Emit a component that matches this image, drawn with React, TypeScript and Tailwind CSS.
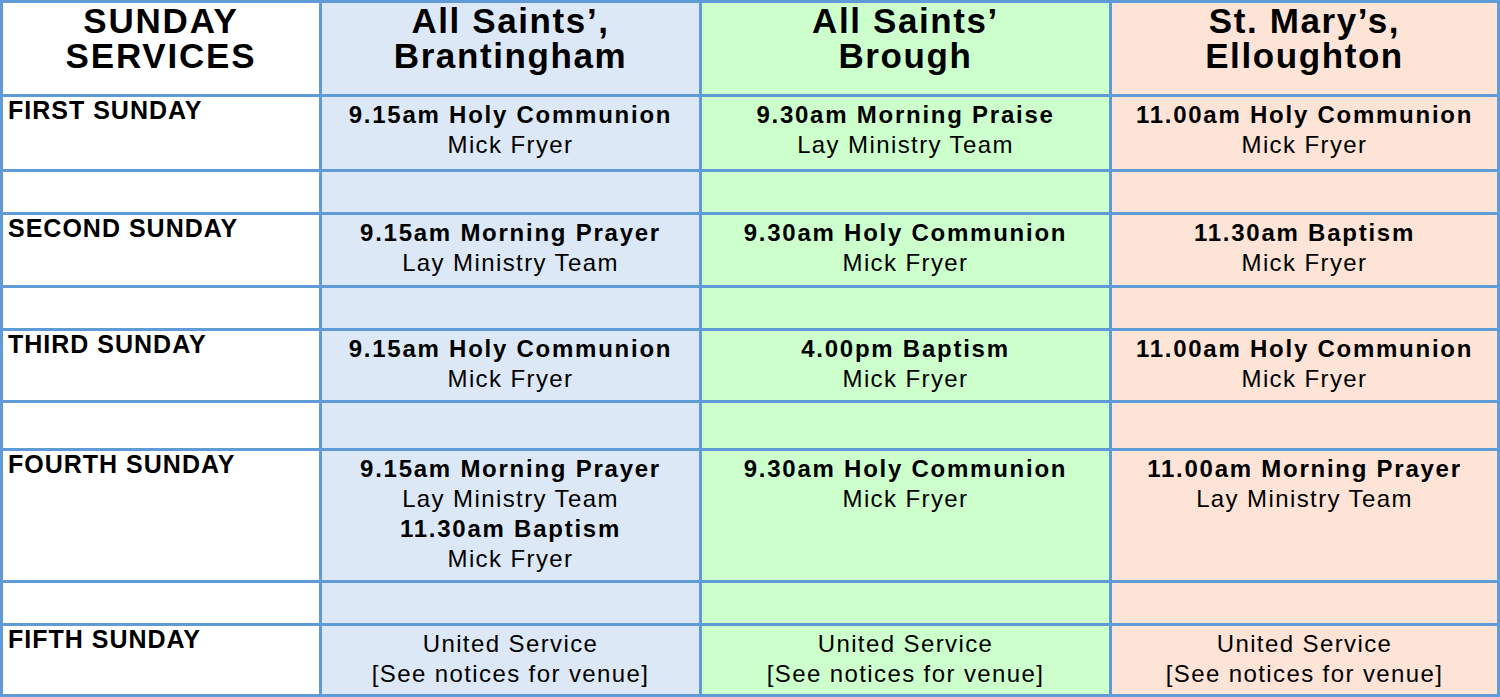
import React from "react";

type Entry = { bold?: boolean; text: string };

const rows: { label: string; h: string; cells: Entry[][] }[] = [
  {
    label: "FIRST SUNDAY",
    h: "72px",
    cells: [
      [{ bold: true, text: "9.15am Holy Communion" }, { text: "Mick Fryer" }],
      [{ bold: true, text: "9.30am Morning Praise" }, { text: "Lay Ministry Team" }],
      [{ bold: true, text: "11.00am Holy Communion" }, { text: "Mick Fryer" }],
    ],
  },
  {
    label: "SECOND SUNDAY",
    h: "70px",
    cells: [
      [{ bold: true, text: "9.15am Morning Prayer" }, { text: "Lay Ministry Team" }],
      [{ bold: true, text: "9.30am Holy Communion" }, { text: "Mick Fryer" }],
      [{ bold: true, text: "11.30am Baptism" }, { text: "Mick Fryer" }],
    ],
  },
  {
    label: "THIRD SUNDAY",
    h: "69px",
    cells: [
      [{ bold: true, text: "9.15am Holy Communion" }, { text: "Mick Fryer" }],
      [{ bold: true, text: "4.00pm Baptism" }, { text: "Mick Fryer" }],
      [{ bold: true, text: "11.00am Holy Communion" }, { text: "Mick Fryer" }],
    ],
  },
  {
    label: "FOURTH SUNDAY",
    h: "129px",
    cells: [
      [
        { bold: true, text: "9.15am Morning Prayer" },
        { text: "Lay Ministry Team" },
        { bold: true, text: "11.30am Baptism" },
        { text: "Mick Fryer" },
      ],
      [{ bold: true, text: "9.30am Holy Communion" }, { text: "Mick Fryer" }],
      [{ bold: true, text: "11.00am Morning Prayer" }, { text: "Lay Ministry Team" }],
    ],
  },
  {
    label: "FIFTH SUNDAY",
    h: "68px",
    cells: [
      [{ text: "United Service" }, { text: "[See notices for venue]" }],
      [{ text: "United Service" }, { text: "[See notices for venue]" }],
      [{ text: "United Service" }, { text: "[See notices for venue]" }],
    ],
  },
];

const bgs = ["bg-[#dce8f5]", "bg-[#ccffcc]", "bg-[#fde4d7]"];
const gapH = ["h-[40px]", "h-[40px]", "h-[45px]", "h-[40px]"];

function Cell({ entries, bg }: { entries: Entry[]; bg: string }) {
  return (
    <div className={`${bg} flex flex-col items-center pt-[3px]`}>
      {entries.map((e, i) => (
        <div
          key={i}
          className={
            e.bold
              ? "text-[24px] leading-[30px] font-bold tracking-[1.75px] whitespace-nowrap"
              : "text-[24px] leading-[30px] font-normal tracking-[1.4px] whitespace-nowrap"
          }
        >
          {e.text}
        </div>
      ))}
    </div>
  );
}

export default function App() {
  const heads = [
    ["All Saints’,", "Brantingham"],
    ["All Saints’", "Brough"],
    ["St. Mary’s,", "Elloughton"],
  ];
  return (
    <div
      className="w-[1500px] h-[697px] bg-[#5f9bd6] p-[3px] text-black overflow-hidden"
      style={{ fontFamily: '"Liberation Sans", Arial, sans-serif' }}
    >
      <div className="grid grid-cols-[316px_377px_407px_385px] gap-[3px]">
        {/* Header */}
        <div className="bg-white h-[91px] flex flex-col items-center text-[35px] leading-[35px] font-bold tracking-[1.8px]">
          <div>SUNDAY</div>
          <div>SERVICES</div>
        </div>
        {heads.map((h, i) => (
          <div
            key={i}
            className={`${bgs[i]} h-[91px] flex flex-col items-center text-[35px] leading-[35px] font-bold tracking-[1.6px]`}
          >
            <div>{h[0]}</div>
            <div>{h[1]}</div>
          </div>
        ))}
        {rows.map((r, ri) => (
          <React.Fragment key={ri}>
            <div
              className="bg-white pl-[5px] pt-[1px] text-[25px] leading-[25px] font-bold tracking-[1px] whitespace-nowrap"
              style={{ height: r.h }}
            >
              {r.label}
            </div>
            {r.cells.map((c, ci) => (
              <Cell key={ci} entries={c} bg={bgs[ci]} />
            ))}
            {ri < rows.length - 1 && (
              <>
                <div className={`bg-white ${gapH[ri]}`} />
                <div className={`${bgs[0]} ${gapH[ri]}`} />
                <div className={`${bgs[1]} ${gapH[ri]}`} />
                <div className={`${bgs[2]} ${gapH[ri]}`} />
              </>
            )}
          </React.Fragment>
        ))}
      </div>
    </div>
  );
}
